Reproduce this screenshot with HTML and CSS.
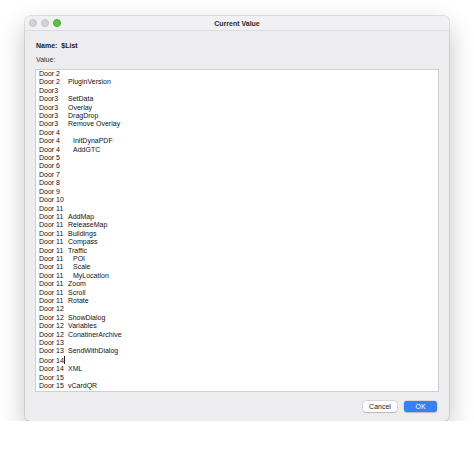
FILE: index.html
```html
<!DOCTYPE html>
<html lang="en">
<head>
    <meta charset="UTF-8">
    <title>Current Value</title>
    <link rel="stylesheet" href="styles.css">
</head>
<body>
    <div class="window">
        <div class="titlebar">
            <div class="lights">
                <span class="light"></span>
                <span class="light"></span>
                <span class="light green"></span>
            </div>
            <div class="title">Current Value</div>
        </div>
        <div class="content">
            <div class="name">Name:&nbsp; $List</div>
            <div class="value-label">Value:</div>
            <div class="textbox">
                <div class="line"><span class="door">Door 2</span></div>
                <div class="line"><span class="door">Door 2</span><span>PluginVersion</span></div>
                <div class="line"><span class="door">Door3</span></div>
                <div class="line"><span class="door">Door3</span><span>SetData</span></div>
                <div class="line"><span class="door">Door3</span><span>Overlay</span></div>
                <div class="line"><span class="door">Door3</span><span>DragDrop</span></div>
                <div class="line"><span class="door">Door3</span><span>Remove Overlay</span></div>
                <div class="line"><span class="door">Door 4</span></div>
                <div class="line"><span class="door">Door 4</span><span class="far">InitDynaPDF</span></div>
                <div class="line"><span class="door">Door 4</span><span class="far">AddGTC</span></div>
                <div class="line"><span class="door">Door 5</span></div>
                <div class="line"><span class="door">Door 6</span></div>
                <div class="line"><span class="door">Door 7</span></div>
                <div class="line"><span class="door">Door 8</span></div>
                <div class="line"><span class="door">Door 9</span></div>
                <div class="line"><span class="door">Door 10</span></div>
                <div class="line"><span class="door">Door 11</span></div>
                <div class="line"><span class="door">Door 11</span><span>AddMap</span></div>
                <div class="line"><span class="door">Door 11</span><span>ReleaseMap</span></div>
                <div class="line"><span class="door">Door 11</span><span>Buildings</span></div>
                <div class="line"><span class="door">Door 11</span><span>Compass</span></div>
                <div class="line"><span class="door">Door 11</span><span>Traffic</span></div>
                <div class="line"><span class="door">Door 11</span><span class="far">POI</span></div>
                <div class="line"><span class="door">Door 11</span><span class="far">Scale</span></div>
                <div class="line"><span class="door">Door 11</span><span class="far">MyLocation</span></div>
                <div class="line"><span class="door">Door 11</span><span>Zoom</span></div>
                <div class="line"><span class="door">Door 11</span><span>Scroll</span></div>
                <div class="line"><span class="door">Door 11</span><span>Rotate</span></div>
                <div class="line"><span class="door">Door 12</span></div>
                <div class="line"><span class="door">Door 12</span><span>ShowDialog</span></div>
                <div class="line"><span class="door">Door 12</span><span>Variables</span></div>
                <div class="line"><span class="door">Door 12</span><span>ConatinerArchive</span></div>
                <div class="line"><span class="door">Door 13</span></div>
                <div class="line"><span class="door">Door 13</span><span>SendWithDialog</span></div>
                <div class="line"><span class="door">Door 14<span class="caret"></span></span></div>
                <div class="line"><span class="door">Door 14</span><span>XML</span></div>
                <div class="line"><span class="door">Door 15</span></div>
                <div class="line"><span class="door">Door 15</span><span>vCardQR</span></div>
                <div class="line"><span class="door">Door 16</span></div>
            </div>
            <div class="buttons">
                <button type="button" class="btn">Cancel</button>
                <button type="button" class="btn ok">OK</button>
            </div>
        </div>
    </div>
</body>
</html>
```

FILE: styles.css
```css
body {
    margin: 0;
    padding: 0;
    background-color: #ffffff;
    font-family: "Liberation Sans", Arial, sans-serif;
    color: #1a1a1a;
}

.window {
    margin: 16px 0 0 25px;
    width: 424px;
    height: 405px;
    background-color: #ededef;
    border-radius: 5px;
    box-shadow: 0 0 0 0.5px rgba(0, 0, 0, 0.2), 0 10px 26px rgba(0, 0, 0, 0.24);
    display: flex;
    flex-direction: column;
    overflow: hidden;
}

.titlebar {
    height: 15px;
    background-color: #f1f1f3;
    border-bottom: 1px solid #dcdcde;
    display: flex;
    align-items: center;
    position: relative;
}

.lights {
    display: flex;
    gap: 4px;
    padding-left: 4px;
}

.light {
    width: 6px;
    height: 6px;
    border-radius: 50%;
    background-color: #d3d3d5;
    border: 0.5px solid #c4c4c6;
}

.light.green {
    background-color: #5cc047;
    border-color: #4aa93a;
}

.title {
    position: absolute;
    left: 0;
    right: 0;
    text-align: center;
    font-size: 7px;
    font-weight: bold;
    color: #2a2a2a;
}

.content {
    flex: 1;
    display: flex;
    flex-direction: column;
    padding: 11px 10px 9px 10px;
}

.name {
    font-size: 7px;
    font-weight: bold;
    line-height: 8px;
    padding-left: 1px;
}

.value-label {
    font-size: 7px;
    line-height: 8px;
    margin-top: 6px;
    padding-left: 1px;
    color: #333;
}

.textbox {
    margin-top: 5px;
    height: 323px;
    background-color: #fff;
    border: 1px solid #cfcfd2;
    box-sizing: border-box;
    padding: 0 3px;
    overflow: hidden;
    font-size: 7px;
    line-height: 8.4px;
    color: #111;
}

.line {
    display: flex;
    white-space: nowrap;
}

.door {
    width: 29px;
    flex-shrink: 0;
}

.far {
    padding-left: 5px;
}

.caret {
    display: inline-block;
    width: 1px;
    height: 8px;
    background-color: #222;
    vertical-align: -1px;
}

.buttons {
    display: flex;
    justify-content: flex-end;
    gap: 7px;
    margin-top: 9px;
    padding-right: 2px;
}

.btn {
    width: 34px;
    height: 11px;
    padding: 0;
    border: none;
    border-radius: 3px;
    background-color: #fff;
    box-shadow: 0 0 0 0.5px rgba(0, 0, 0, 0.15), 0 0.5px 1px rgba(0, 0, 0, 0.15);
    font-family: "Liberation Sans", Arial, sans-serif;
    font-size: 7px;
    color: #222;
}

.btn.ok {
    width: 33px;
    background-color: #3a7ff6;
    color: #fff;
}
```
